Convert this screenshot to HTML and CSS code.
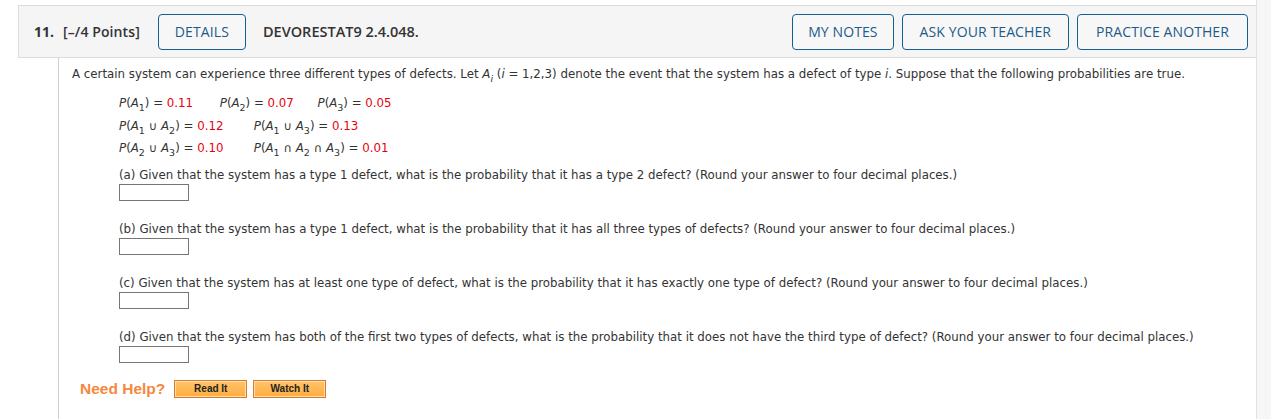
FILE: index.html
```html
<!DOCTYPE html>
<html>
<head>
<meta charset="utf-8">
<link rel="stylesheet" href="styles.css">
</head>
<body>
<div class="page">
  <div class="question">
    <div class="qhead">
      <span class="num">11.</span>
      <span class="points">[–/4 Points]</span>
      <button class="btn details">DETAILS</button>
      <span class="code">DEVORESTAT9 2.4.048.</span>
      <div class="actions">
        <button class="btn notes">MY NOTES</button>
        <button class="btn">ASK YOUR TEACHER</button>
        <button class="btn practice">PRACTICE ANOTHER</button>
      </div>
    </div>
    <div class="qbody">
      <p class="intro">A certain system can experience three different types of defects. Let <i>A<sub>i</sub></i> (<i>i</i> = 1,2,3) denote the event that the system has a defect of type <i>i</i>. Suppose that the following probabilities are true.</p>
      <div class="probs">
        <div class="prow">
          <span class="pw1"><i>P</i>(<i>A</i><sub>1</sub>) = <span class="red">0.11</span></span>
          <span class="pw1b"><i>P</i>(<i>A</i><sub>2</sub>) = <span class="red">0.07</span></span>
          <span><i>P</i>(<i>A</i><sub>3</sub>) = <span class="red">0.05</span></span>
        </div>
        <div class="prow">
          <span class="pw2"><i>P</i>(<i>A</i><sub>1</sub> ∪ <i>A</i><sub>2</sub>) = <span class="red">0.12</span></span>
          <span><i>P</i>(<i>A</i><sub>1</sub> ∪ <i>A</i><sub>3</sub>) = <span class="red">0.13</span></span>
        </div>
        <div class="prow">
          <span class="pw2"><i>P</i>(<i>A</i><sub>2</sub> ∪ <i>A</i><sub>3</sub>) = <span class="red">0.10</span></span>
          <span><i>P</i>(<i>A</i><sub>1</sub> ∩ <i>A</i><sub>2</sub> ∩ <i>A</i><sub>3</sub>) = <span class="red">0.01</span></span>
        </div>
      </div>
      <div class="part">
        <p>(a) Given that the system has a type 1 defect, what is the probability that it has a type 2 defect? (Round your answer to four decimal places.)</p>
        <input class="ans" type="text">
      </div>
      <div class="part">
        <p>(b) Given that the system has a type 1 defect, what is the probability that it has all three types of defects? (Round your answer to four decimal places.)</p>
        <input class="ans" type="text">
      </div>
      <div class="part">
        <p>(c) Given that the system has at least one type of defect, what is the probability that it has exactly one type of defect? (Round your answer to four decimal places.)</p>
        <input class="ans" type="text">
      </div>
      <div class="part">
        <p>(d) Given that the system has both of the first two types of defects, what is the probability that it does not have the third type of defect? (Round your answer to four decimal places.)</p>
        <input class="ans" type="text">
      </div>
      <div class="help">
        <span class="needhelp">Need Help?</span>
        <button class="hbtn">Read It</button>
        <button class="hbtn">Watch It</button>
      </div>
    </div>
  </div>
  <div class="side"></div>
</div>
</body>
</html>
```
FILE: styles.css
```css
html, body { margin: 0; padding: 0; background: #fff; }
body { overflow: hidden; }
.page { display: flex; min-height: 419px; }
.question { margin-left: 18px; width: 1238px; flex: none; }
.side { flex: 1; background: #f6f6f6; border-left: 1px solid #e2e2e2; }
.qhead {
  margin-top: 5px;
  height: 51px;
  box-sizing: content-box;
  border: 1px solid #dcdcdc;
  border-right: none;
  background: #f5f5f5;
  display: flex;
  align-items: center;
  font-family: "Open Sans", sans-serif;
  color: #333;
  padding-left: 15px;
  padding-right: 8px;
}
.num { font-weight: 700; font-size: 14px; margin-right: 9px; }
.points { font-weight: 600; font-size: 14px; margin-right: 18px; letter-spacing: 0.1px; }
.btn {
  font-family: "Open Sans", sans-serif;
  font-size: 14px;
  color: #1d5b8a;
  background: #f7f7f7;
  border: 1px solid #146094;
  border-radius: 4px;
  height: 36px;
  padding: 0 17px;
  letter-spacing: 0.1px;
}
.notes { padding: 0 15px; }
.practice { padding: 0 18px; }
.details { margin-right: 17px; padding: 0 16px; }
.code { font-weight: 600; font-size: 14.5px; }
.actions { margin-left: auto; display: flex; gap: 8px; }
.qbody {
  margin-left: 40px;
  border-left: 1px solid #cfcfcf;
  padding-left: 13px;
  font-family: "DejaVu Sans", Verdana, sans-serif;
  font-size: 11.8px;
  color: #333;
  padding-top: 8px;
  padding-bottom: 40px;
}
.qbody p { margin: 0; line-height: 16px; }
.intro { margin-bottom: 10px !important; }
.probs { padding-left: 47px; }
.prow { line-height: 22.5px; height: 22.5px; }
.prow > span { display: inline-block; }
.pw1 { width: 97px; }
.pw1b { width: 94px; }
.pw2 { width: 131px; }
sub { font-size: 9.5px; vertical-align: -4px; line-height: 0; }
.red { color: #e8000b; }
.part { padding-left: 47px; margin-top: 7px; height: 46px; }
.part + .part { margin-top: 8px; }
.ans {
  display: block;
  box-sizing: border-box;
  width: 70px;
  height: 17px;
  border: 1px solid #767676;
  margin-top: 1px;
  padding: 0 2px;
}
.help { display: flex; align-items: center; margin-top: 5px; padding-left: 8px; }
.needhelp {
  font-family: "Liberation Sans", Arial, sans-serif;
  font-weight: 700;
  font-size: 15.5px;
  color: #f5883c;
  margin-right: 9px;
}
.hbtn {
  font-family: "Liberation Sans", Arial, sans-serif;
  font-weight: 700;
  font-size: 10px;
  color: #222;
  width: 73px;
  height: 18px;
  padding: 0;
  background: linear-gradient(#ffc46a, #ffad40);
  border: 1px solid #d9782f;
  box-shadow: inset 0 0 0 1px #ffe0a8;
  margin-right: 6px;
}
```
